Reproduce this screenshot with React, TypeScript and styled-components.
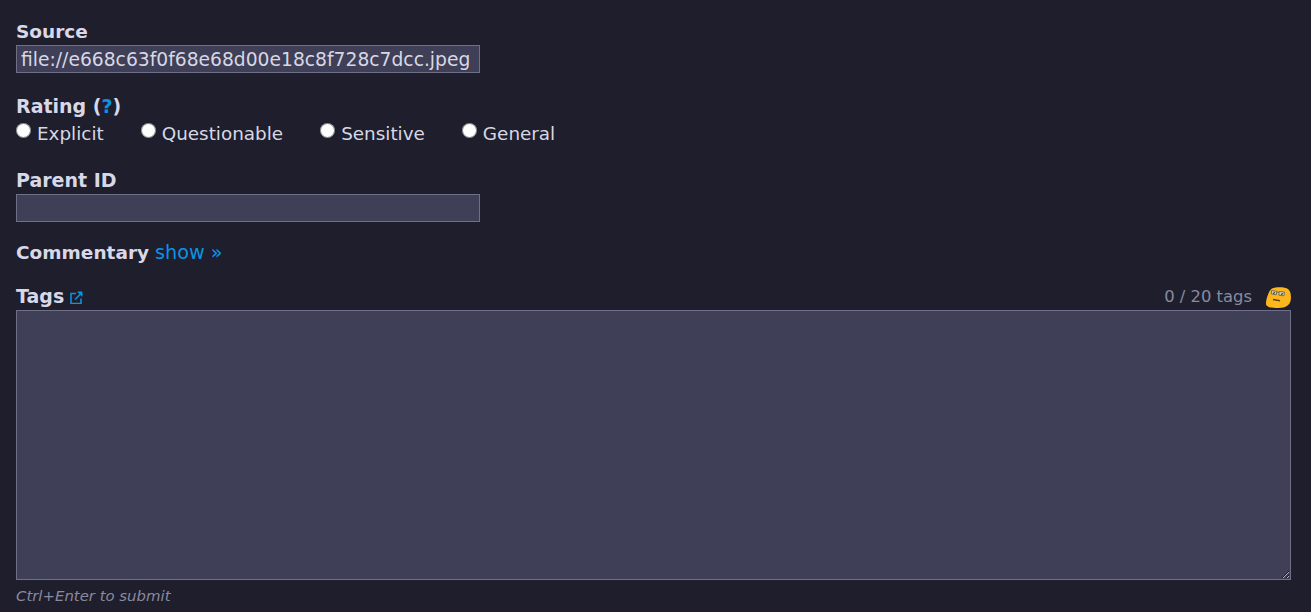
import React from "react";
import styled, { createGlobalStyle } from "styled-components";

const Global = createGlobalStyle`
  html, body { margin: 0; padding: 0; background: #1e1e2c; }
  body { font-family: "DejaVu Sans", Verdana, sans-serif; font-size: 18px; color: #d8d8e4; overflow: hidden; }
`;
const Page = styled.form`
  display: flex; flex-direction: column; height: 612px; box-sizing: border-box; padding: 20px 20px 0 16px;
`;
const Field = styled.div<{ $gap: number }>`
  margin-bottom: ${(p) => p.$gap}px;
`;
const Label = styled.label<{ $large?: boolean }>`
  display: block; font-weight: 700; font-size: ${(p) => (p.$large ? 19 : 18.5)}px;
  line-height: ${(p) => (p.$large ? 22 : 24)}px; height: 25px; color: #d8d8e8;
`;
const TextInput = styled.input`
  display: block; box-sizing: border-box; width: 464px; height: 28px; margin: 0; padding: 0 4px;
  background: #3f3f57; border: 1px solid #6f6f88; border-radius: 0; color: #d8d8e4;
  font: 18.72px "DejaVu Sans", Verdana, sans-serif; outline: none;
`;
const Link = styled.a`
  color: #0a93e4; text-decoration: none;
`;
const BoldLink = styled(Link)` font-weight: 700; `;
const Radios = styled.div`
  display: flex; gap: 37px; height: 28px; padding-top: 1px; align-items: flex-start;
`;
const RadioLabel = styled.label`
  display: flex; align-items: flex-start; color: #d8d8e4; font-size: 18.36px; line-height: 22px; padding-top: 2px;
`;
const Radio = styled.input`
  width: 15px; height: 15px; margin: 0 6px 0 0; flex: none; accent-color: #fff;
`;
const Inline = styled.div`
  font-size: 18.5px; line-height: 24px; color: #d8d8e4;
`;
const InlineStrong = styled.strong` font-weight: 700; color: #d8d8e8; margin-right: 6px; `;
const ShowLink = styled(Link)` font-size: 19.2px; `;
const TagsHeader = styled.div`
  display: flex; justify-content: space-between; align-items: flex-end; height: 25px;
`;
const TagsTitle = styled.div`
  display: flex; align-items: center; gap: 6px; font-weight: 700; font-size: 19px; line-height: 22px; color: #d8d8e8; margin-bottom: 3px;
`;
const TagsMeta = styled.div`
  display: flex; align-items: center; gap: 14px; color: #8a8a9f; font-size: 16.4px; line-height: 22px; margin-bottom: 2px;
`;
const TextArea = styled.textarea`
  display: block; box-sizing: border-box; width: 1275px; height: 270px; margin: 0; padding: 4px;
  background: #3f3f57; border: 1px solid #6f6f88; border-radius: 0; color: #d8d8e4;
  font: 18px "DejaVu Sans", Verdana, sans-serif; outline: none; resize: vertical;
`;
const Hint = styled.div`
  font-style: italic; font-size: 14.9px; line-height: 18px; color: #8a8a9f; margin-top: 7px;
`;

const ExternalIcon = () => (
  <svg width="13" height="13" viewBox="0 0 13 13" fill="none" stroke="#0a93e4" strokeWidth="1.6" style={{ marginTop: 3 }}>
    <path d="M6 2.500H1v10h10V7.500" />
    <path d="M5 8.500L11 2.500" />
    <path d="M7.500 1h4.500v4.500" fill="#0a93e4" strokeWidth="1" />
  </svg>
);

const Face = () => (
  <svg width="25" height="21" viewBox="0 0 25 21">
    <path d="M6 1.500C10 -.3 19 -.3 22 2C24.500 4 25.300 8 24.800 12.500C24.300 18 20 21 12.500 21C5 21 0 20.300 0 16.500C0 12 3 3 6 1.500Z" fill="#fdb71c" />
    <g fill="#d9cfae" stroke="#77705f" strokeWidth="1">
      <path d="M5.500 3.500L10.800 4.300L10.300 7.800L5.300 7Z" />
      <path d="M13 4.500L18.500 5L18 8.800L13 8.300Z" />
    </g>
    <path d="M10.800 5L13 5.500" stroke="#77705f" strokeWidth="1" />
    <path d="M7 6.500L9 5.500M15 7.500L17 6.500" stroke="#3b3420" strokeWidth="1.200" />
    <path d="M7 12.500L14 13.800" stroke="#5b4312" strokeWidth="1.400" />
  </svg>
);

export default function App() {
  return (
    <>
      <Global />
      <Page onSubmit={(e) => e.preventDefault()}>
        <Field $gap={22}>
          <Label>Source</Label>
          <TextInput defaultValue="file://e668c63f0f68e68d00e18c8f728c7dcc.jpeg" />
        </Field>
        <Field $gap={20}>
          <Label $large>
            Rating (<BoldLink href="#">?</BoldLink>)
          </Label>
          <Radios>
            <RadioLabel><Radio type="radio" name="r" />Explicit</RadioLabel>
            <RadioLabel><Radio type="radio" name="r" />Questionable</RadioLabel>
            <RadioLabel><Radio type="radio" name="r" />Sensitive</RadioLabel>
            <RadioLabel><Radio type="radio" name="r" />General</RadioLabel>
          </Radios>
        </Field>
        <Field $gap={19}>
          <Label $large>Parent ID</Label>
          <TextInput />
        </Field>
        <Field $gap={20}>
          <Inline>
            <InlineStrong>Commentary</InlineStrong>
            <ShowLink href="#">show »</ShowLink>
          </Inline>
        </Field>
        <Field $gap={0}>
          <TagsHeader>
            <TagsTitle>Tags <ExternalIcon /></TagsTitle>
            <TagsMeta>0 / 20 tags <Face /></TagsMeta>
          </TagsHeader>
          <TextArea />
          <Hint>Ctrl+Enter to submit</Hint>
        </Field>
      </Page>
    </>
  );
}
